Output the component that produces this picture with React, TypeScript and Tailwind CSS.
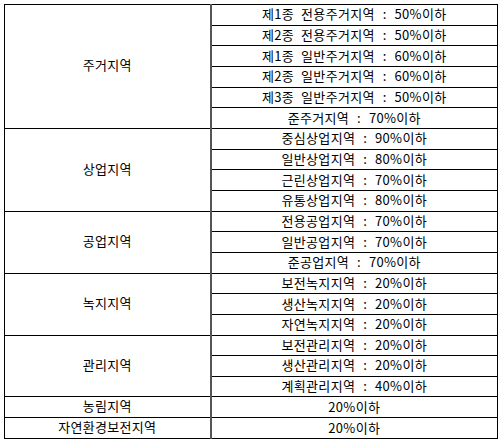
import React from "react";

type Group = { name: string; items: string[] };

const groups: Group[] = [
  {
    name: "주거지역",
    items: [
      "제1종 전용주거지역 : 50%이하",
      "제2종 전용주거지역 : 50%이하",
      "제1종 일반주거지역 : 60%이하",
      "제2종 일반주거지역 : 60%이하",
      "제3종 일반주거지역 : 50%이하",
      "준주거지역 : 70%이하",
    ],
  },
  {
    name: "상업지역",
    items: [
      "중심상업지역 : 90%이하",
      "일반상업지역 : 80%이하",
      "근린상업지역 : 70%이하",
      "유통상업지역 : 80%이하",
    ],
  },
  {
    name: "공업지역",
    items: ["전용공업지역 : 70%이하", "일반공업지역 : 70%이하", "준공업지역 : 70%이하"],
  },
  {
    name: "녹지지역",
    items: ["보전녹지지역 : 20%이하", "생산녹지지역 : 20%이하", "자연녹지지역 : 20%이하"],
  },
  {
    name: "관리지역",
    items: ["보전관리지역 : 20%이하", "생산관리지역 : 20%이하", "계획관리지역 : 40%이하"],
  },
  { name: "농림지역", items: ["20%이하"] },
  { name: "자연환경보전지역", items: ["20%이하"] },
];

// " : " gets wider gaps like the bitmap font in the original
function Label({ text }: { text: string }) {
  const parts = text.split(" : ");
  if (parts.length === 1) return <>{text}</>;
  return (
    <>
      {parts[0].split(" ").map((w, i) => (
        <span key={i} className={i > 0 ? "ml-[7px]" : ""}>
          {w}
        </span>
      ))}
      <span className="mx-[8px]">:</span>
      {parts[1]}
    </>
  );
}

export default function App() {
  return (
    <div className="bg-white w-[500px] h-[444px] pt-[4px] pl-[4px] font-['Noto_Sans_CJK_KR','Noto_Sans',sans-serif] text-[13px] tracking-[0.3px] text-black">
      <table className="table-fixed border-collapse w-[493px] h-[435px] border border-black">
        <colgroup>
          <col className="w-[206px]" />
          <col className="w-[287px]" />
        </colgroup>
        <tbody>
          {groups.map((g) =>
            g.items.map((item, i) => (
              <tr key={g.name + i} className="h-[20.67px]">
                {i === 0 && (
                  <td
                    rowSpan={g.items.length}
                    className="border border-black border-r-2 border-r-[#555] text-center align-middle p-0 pb-[3px] leading-none"
                  >
                    {g.name}
                  </td>
                )}
                <td className="border border-black text-center align-middle p-0 pb-[2px] leading-none whitespace-nowrap">
                  <Label text={item} />
                </td>
              </tr>
            ))
          )}
        </tbody>
      </table>
    </div>
  );
}
